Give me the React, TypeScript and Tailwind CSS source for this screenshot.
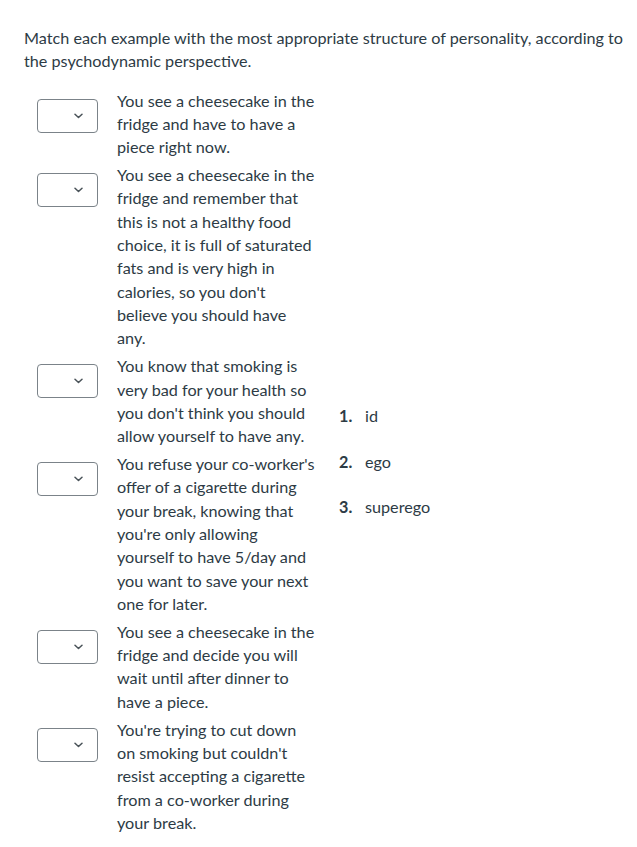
import React from "react";

const rows = [
  "You see a cheesecake in the fridge and have to have a piece right now.",
  "You see a cheesecake in the fridge and remember that this is not a healthy food choice, it is full of saturated fats and is very high in calories, so you don't believe you should have any.",
  "You know that smoking is very bad for your health so you don't think you should allow yourself to have any.",
  "You refuse your co-worker's offer of a cigarette during your break, knowing that you're only allowing yourself to have 5/day and you want to save your next one for later.",
  "You see a cheesecake in the fridge and decide you will wait until after dinner to have a piece.",
  "You're trying to cut down on smoking but couldn't resist accepting a cigarette from a co-worker during your break.",
];

const options = ["id", "ego", "superego"];

function SelectBox() {
  return (
    <div className="mt-[10px] flex h-[34px] w-[61px] shrink-0 items-center justify-end rounded-[4px] border border-[#7b8389] bg-white pr-[14px]">
      <svg width="9" height="6" viewBox="0 0 9 6" fill="none">
        <path d="M1 1.2l3.5 3.3L8 1.2" stroke="#4a5359" strokeWidth="1.5" strokeLinecap="round" strokeLinejoin="round" />
      </svg>
    </div>
  );
}

export default function App() {
  return (
    <div
      className="min-h-[847px] w-[637px] bg-white pl-[24px] pt-[26px] text-[16.2px] leading-[23.3px] text-[#2d3b45]"
      style={{ fontFamily: "Lato, 'Noto Sans', sans-serif" }}
    >
      <p className="w-[604px]">
        Match each example with the most appropriate structure of personality, according to the psychodynamic perspective.
      </p>
      <div className="mt-[16px] flex items-center pl-[13px]">
        <div className="flex flex-col gap-[4.7px]">
          {rows.map((r, i) => (
            <div key={i} className="flex">
              <SelectBox />
              <div className="ml-[19px] w-[200px]">{r}</div>
            </div>
          ))}
        </div>
        <ol className="ml-[22px] flex flex-col gap-[22.2px]">
          {options.map((o, i) => (
            <li key={o} className="flex">
              <span className="w-[26px] font-bold">{i + 1}.</span>
              <span>{o}</span>
            </li>
          ))}
        </ol>
      </div>
    </div>
  );
}
